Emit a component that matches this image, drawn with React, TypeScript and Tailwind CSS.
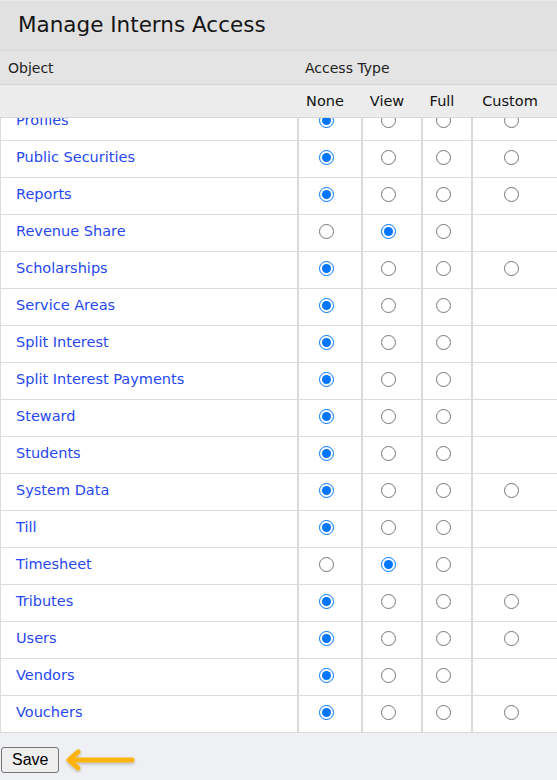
import React from "react";

type Row = { name: string; sel: "none" | "view"; custom: boolean };

const rows: Row[] = [
  { name: "Profiles", sel: "none", custom: true },
  { name: "Public Securities", sel: "none", custom: true },
  { name: "Reports", sel: "none", custom: true },
  { name: "Revenue Share", sel: "view", custom: false },
  { name: "Scholarships", sel: "none", custom: true },
  { name: "Service Areas", sel: "none", custom: false },
  { name: "Split Interest", sel: "none", custom: false },
  { name: "Split Interest Payments", sel: "none", custom: false },
  { name: "Steward", sel: "none", custom: false },
  { name: "Students", sel: "none", custom: false },
  { name: "System Data", sel: "none", custom: true },
  { name: "Till", sel: "none", custom: false },
  { name: "Timesheet", sel: "view", custom: false },
  { name: "Tributes", sel: "none", custom: true },
  { name: "Users", sel: "none", custom: true },
  { name: "Vendors", sel: "none", custom: false },
  { name: "Vouchers", sel: "none", custom: true },
];

const font = { fontFamily: '"DejaVu Sans", sans-serif' };

function Radio({ name, checked }: { name: string; checked?: boolean }) {
  return <input type="radio" name={name} defaultChecked={checked} className="m-0 h-[15px] w-[15px] accent-[#0075ff]" />;
}

function AccessRow({ row, first }: { row: Row; first?: boolean }) {
  const n = row.name.replace(/\s/g, "-");
  return (
    <div className={`flex h-[37px] border-b border-[#dcdcdc] ${first ? "-mt-[14px]" : ""}`}>
      <div className="flex w-[296px] items-center pb-[2px] pl-[15px]">
        <a href="#" className="text-[14.5px] text-[#2748f2]">{row.name}</a>
      </div>
      <div className="flex w-[64px] items-center justify-center border-l-2 border-[#dadada] pr-2 pb-[3px]">
        <Radio name={n} checked={row.sel === "none"} />
      </div>
      <div className="flex w-[60px] items-center justify-center border-l-2 border-[#dadada] pr-2 pb-[3px]">
        <Radio name={n} checked={row.sel === "view"} />
      </div>
      <div className="flex w-[50px] items-center justify-center border-l-2 border-[#dadada] pr-2 pb-[3px]">
        <Radio name={n} />
      </div>
      <div className="flex flex-1 items-center justify-center border-l-2 border-[#dadada] pr-2 pb-[3px]">
        {row.custom && <Radio name={n} />}
      </div>
    </div>
  );
}

export default function App() {
  return (
    <div className="flex h-[780px] w-full flex-col overflow-hidden bg-[#eff0f4]" style={font}>
      <div className="flex h-[51px] items-center border-t border-[#eaeaea] border-b border-b-[#d8d8d8] bg-[#e1e1e1] pl-[18px]">
        <h1 className="text-[21.5px] text-[#151515]">Manage Interns Access</h1>
      </div>
      <div className="flex h-[34px] items-center border-b border-[#d6d6d6] bg-[#e4e4e4] pt-[1px] text-[14px] text-[#222]">
        <div className="w-[297px] pl-[8px]">Object</div>
        <div className="pl-[8px]">Access Type</div>
      </div>
      <div className="flex h-[33px] items-center border-b border-[#d8d8d8] bg-[#ececec] pt-[1px] text-[14.5px] text-[#111]">
        <div className="w-[297px]" />
        <div className="w-[64px] pr-2 text-center">None</div>
        <div className="w-[60px] pr-2 text-center">View</div>
        <div className="w-[50px] pr-2 text-center">Full</div>
        <div className="flex-1 pr-2 text-center">Custom</div>
      </div>
      <div className="h-[615px] overflow-hidden border-l border-[#dcdcdc] bg-white">
        {rows.map((r, i) => (
          <AccessRow key={r.name} row={r} first={i === 0} />
        ))}
      </div>
      <div className="mt-[14px] flex items-center pl-[1px]">
        <button
          className="h-[26px] rounded-[3px] border border-[#767676] bg-[#efefef] px-[10px] text-[16px] text-black"
          style={{ fontFamily: '"Liberation Sans", Arial, sans-serif' }}
        >
          Save
        </button>
        <svg width="74" height="26" viewBox="0 0 74 26" className="ml-[4px]">
          <defs>
            <filter id="sh" x="-20%" y="-50%" width="140%" height="200%">
              <feDropShadow dx="0" dy="1.5" stdDeviation="1.5" floodColor="#000" floodOpacity="0.25" />
            </filter>
          </defs>
          <g filter="url(#sh)" stroke="#fbb30f" strokeWidth="5" strokeLinecap="round" strokeLinejoin="round" fill="none">
            <line x1="8" y1="13" x2="69" y2="13" />
            <polyline points="15,5 6,13 15,21" />
          </g>
        </svg>
      </div>
    </div>
  );
}
